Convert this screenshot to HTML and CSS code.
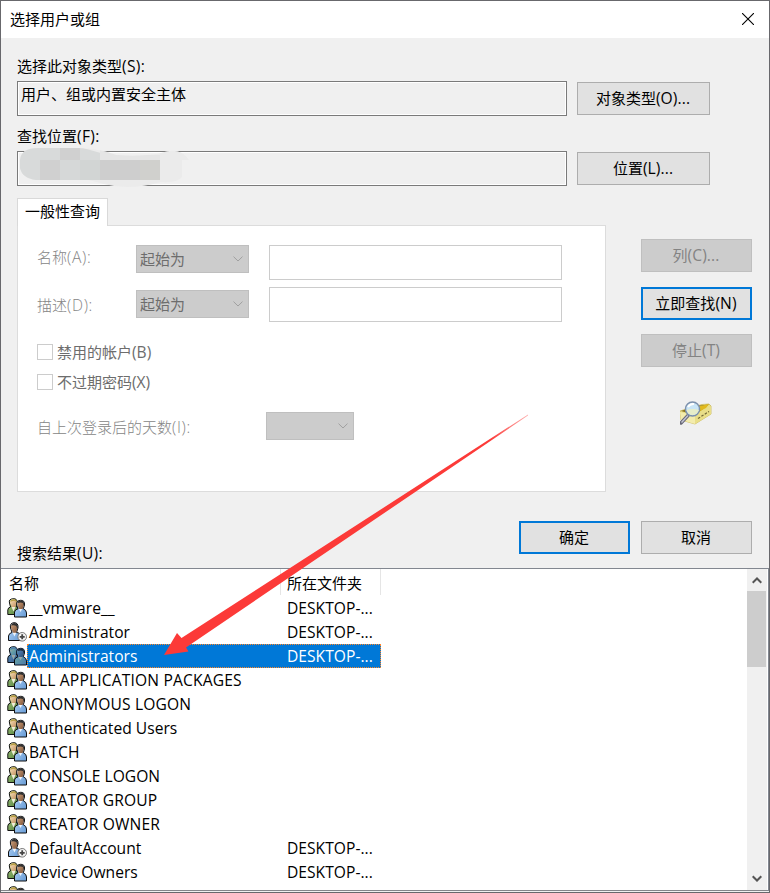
FILE: index.html
```html
<!DOCTYPE html>
<html lang="zh-CN">
<head>
<meta charset="utf-8">
<title>选择用户或组</title>
<link rel="stylesheet" href="styles.css">
</head>
<body>
<svg class="defs" width="0" height="0" aria-hidden="true">
  <defs>
    <linearGradient id="face" x1="0" y1="0" x2="1" y2="1"><stop offset="0" stop-color="#fbe5bd"/><stop offset="1" stop-color="#c08e5e"/></linearGradient>
    <linearGradient id="face2" x1="0" y1="0" x2="1" y2="1"><stop offset="0" stop-color="#d0a581"/><stop offset="1" stop-color="#805335"/></linearGradient>
    <linearGradient id="green" x1="0" y1="0" x2="1" y2="1"><stop offset="0" stop-color="#a8cc83"/><stop offset="1" stop-color="#4e7c36"/></linearGradient>
    <linearGradient id="blue" x1="0" y1="0" x2="1" y2="1"><stop offset="0" stop-color="#b9d9fa"/><stop offset="1" stop-color="#6599d4"/></linearGradient>
    <symbol id="group" viewBox="0 0 20 20">
      <path d="M.8 16.500V12Q1 9.500 3.500 9L2.500 5Q1.500 1 6 .8Q10 0 10.500 5L9.500 9L12 11V16.500Z" fill="url(#green)" stroke="#111" stroke-width="1"/>
      <path d="M3 5Q2.500 1.300 6 1.200Q9.800 1 9.800 5L8.300 9H4.800Z" fill="url(#face)"/>
      <path d="M3 4Q4 1 7 1.200Q9.500 1.500 9.800 4L7 2.700L4 3.500Z" fill="#b79d43"/>
      <path d="M4.500 9L6.500 13.500L8.500 9Z" fill="#f1edda"/>
      <path d="M7.500 19V14Q8 11.500 11 10.800L9.700 7Q9 2.500 13.500 2.300Q18 2 17.500 7L16.300 10.800Q19.500 12 19.500 15V19Z" fill="url(#blue)" stroke="#111" stroke-width="1"/>
      <path d="M10.300 7Q10 3 13.500 2.800Q17 2.600 17 7L15.500 11H12Z" fill="url(#face2)"/>
      <path d="M10.300 5Q11 2.600 13.500 2.600Q18 2.500 17 8.500L16 5Q14 3.800 10.300 5Z" fill="#303030"/>
      <path d="M11.800 11L13.500 14L15.200 11Z" fill="#edf4fc"/>
    </symbol>
    <symbol id="user" viewBox="0 0 20 20">
      <path d="M1.500 18.500V14Q2 11 5 10.500L3.500 6Q2.500 1 7 .7Q11.500 .5 11 6L9.500 10.500Q14 11 14 14V18.500Z" fill="url(#blue)" stroke="#111" stroke-width="1"/>
      <path d="M4 6Q3.500 1.500 7 1.200Q10.500 1 10.500 6L9 11H6Z" fill="url(#face2)"/>
      <path d="M4 3.600Q5 1 7 1Q12 .7 10.500 7.500L9.300 4Q7 2.600 4 3.600Z" fill="#303030"/>
      <path d="M5.500 10.800L7.500 14.500L9.300 10.800Z" fill="#edf4fc"/>
      <circle cx="15.200" cy="14.800" r="4.300" fill="#f4f4f4" stroke="#777"/>
      <path d="M15.200 12.300V17.300M12.700 14.800H17.700" stroke="#444" stroke-width="1.800"/>
    </symbol>
    <symbol id="chev" viewBox="0 0 10 6"><path d="M.5 .6L5 5L9.500 .6" fill="none" stroke="currentColor"/></symbol>
  </defs>
</svg>
<div class="dialog">
  <header class="titlebar"><span>选择用户或组</span>
    <svg class="close" width="12" height="12" viewBox="0 0 12 12"><path d="M0 0L12 12M12 0L0 12" stroke="#000" stroke-width="1.100"/></svg>
  </header>
  <main class="content">
    <div class="label">选择此对象类型<span class="key">(S):</span></div>
    <div class="line"><div class="readonly">用户、组或内置安全主体</div><div class="btn wide">对象类型<span class="key">(O)...</span></div></div>
    <div class="label">查找位置<span class="key">(F):</span></div>
    <div class="line"><div class="readonly"></div><div class="btn wide">位置<span class="key">(L)...</span></div>
      <svg class="smudge" width="172" height="42" viewBox="0 0 172 42">
        <defs><clipPath id="blot"><path d="M2 12Q3 0 20 0H60Q84 1 98 7Q124 9 143 5Q162-2 171 12H164V29Q160 35 143 34Q112 43 86 36L70 32H18Q4 30 2 20Z"/></clipPath></defs>
        <g clip-path="url(#blot)">
          <path d="M0 0H172V42H0Z" fill="#ebebeb"/>
          <path d="M0 0H65Q82 5 98 9L110 12V32H0Z" fill="#d8dada"/>
          <path d="M42 0H62V12H42ZM22 12H42V32H22Z" fill="#d0d0d0"/>
          <path d="M42 12H62V32H42Z" fill="#d6d8d8"/><path d="M62 12H82V32H62Z" fill="#d2d5d4"/>
          <path d="M82 12H142V32H82Z" fill="#cecece"/><path d="M122 12H142V32H122Z" fill="#d0d0cd"/>
          <path d="M82 0L112 7H142V12H82Z" fill="#e5e5e5"/>
        </g>
      </svg>
    </div>
    <div class="middle">
      <section class="tabs">
        <div class="tab">一般性查询</div>
        <div class="panel">
          <div class="query first"><span class="faint">名称<span class="key">(A):</span></span><div class="select">起始为<svg width="10" height="6"><use href="#chev"/></svg></div><div class="input"></div></div>
          <div class="query second"><span class="faint">描述<span class="key">(D):</span></span><div class="select">起始为<svg width="10" height="6"><use href="#chev"/></svg></div><div class="input"></div></div>
          <div class="check"><i></i><span>禁用的帐户<span class="key">(B)</span></span></div>
          <div class="check"><i></i><span>不过期密码<span class="key">(X)</span></span></div>
          <div class="days"><span class="faint">自上次登录后的天数<span class="key">(I):</span></span><div class="select small"><svg width="10" height="6"><use href="#chev"/></svg></div></div>
        </div>
      </section>
      <aside class="side">
        <div class="btn disabled">列<span class="key">(C)...</span></div>
        <div class="btn primary">立即查找<span class="key">(N)</span></div>
        <div class="btn disabled">停止<span class="key">(T)</span></div>
        <svg class="search" width="32" height="25" viewBox="0 0 32 25">
          <path d="M0 10L22 3.500L29 3L31 5V13L15 23L1 19Z" fill="#e9df87" stroke="#c9b85c" stroke-width=".8"/>
          <path d="M1 10L15 5L29 3.500L15 14Z" fill="#8a7420"/><path d="M16 6L29 3L26 7L18 11Z" fill="#e1b91c"/>
          <path d="M0 11L15 14.500V23L1 19Z" fill="#f3ecad"/><path d="M15 14.500L31 5V13L15 23Z" fill="#e9de88"/>
          <path d="M18 17.500L29 10.500" stroke="#706637" stroke-width="1.200" stroke-dasharray="2.500 1.500"/>
          <path d="M1 22L8 14.500" stroke="#686878" stroke-width="3.400" stroke-linecap="round"/><path d="M1.500 21.500L8 14.500" stroke="#c3c5d3" stroke-width="1.400"/>
          <circle cx="12.500" cy="8" r="7" fill="#c9e5f6" stroke="#7d91ac" stroke-width="1.500"/>
          <path d="M6.500 9Q12 7 19 9Q17 14 12.500 14Q8 14 6.500 9" fill="#e7edc9"/><path d="M8 6Q10 2.500 14 3" fill="none" stroke="#fff" stroke-width="2"/>
        </svg>
      </aside>
    </div>
    <div class="footer"><div class="label results">搜索结果<span class="key">(U):</span></div><div class="btn primary">确定</div><div class="btn">取消</div></div>
  </main>
  <section class="list">
    <div class="rows">
      <div class="head"><span>名称</span><span>所在文件夹</span></div>
      <div class="row"><svg><use href="#group"/></svg><div class="cells"><span>__vmware__</span><span>DESKTOP-...</span></div></div>
      <div class="row"><svg><use href="#user"/></svg><div class="cells"><span>Administrator</span><span>DESKTOP-...</span></div></div>
      <div class="row selected"><svg><use href="#group"/></svg><div class="cells"><span>Administrators</span><span>DESKTOP-...</span></div></div>
      <div class="row caps"><svg><use href="#group"/></svg><div class="cells"><span>ALL APPLICATION PACKAGES</span></div></div>
      <div class="row caps"><svg><use href="#group"/></svg><div class="cells"><span>ANONYMOUS LOGON</span></div></div>
      <div class="row"><svg><use href="#group"/></svg><div class="cells"><span>Authenticated Users</span></div></div>
      <div class="row caps"><svg><use href="#group"/></svg><div class="cells"><span>BATCH</span></div></div>
      <div class="row"><svg><use href="#group"/></svg><div class="cells"><span>CONSOLE LOGON</span></div></div>
      <div class="row caps"><svg><use href="#group"/></svg><div class="cells"><span>CREATOR GROUP</span></div></div>
      <div class="row caps"><svg><use href="#group"/></svg><div class="cells"><span>CREATOR OWNER</span></div></div>
      <div class="row"><svg><use href="#user"/></svg><div class="cells"><span>DefaultAccount</span><span>DESKTOP-...</span></div></div>
      <div class="row"><svg><use href="#group"/></svg><div class="cells"><span>Device Owners</span><span>DESKTOP-...</span></div></div>
      <div class="row"><svg><use href="#group"/></svg></div>
    </div>
    <div class="scroll">
      <svg class="up" width="10" height="7" viewBox="0 0 10 7"><path d="M.7 5.800L5 1.500L9.300 5.800" fill="none" stroke="#555" stroke-width="2"/></svg>
      <div class="thumb"></div>
      <svg class="down" width="10" height="7" viewBox="0 0 10 7"><path d="M.7 1.200L5 5.500L9.300 1.200" fill="none" stroke="#555" stroke-width="2"/></svg>
    </div>
  </section>
  <svg class="arrow" width="770" height="893" viewBox="0 0 770 893">
    <defs><linearGradient id="fade" gradientUnits="userSpaceOnUse" x1="528" y1="415" x2="490" y2="440"><stop offset="0" stop-color="#fc3a38" stop-opacity=".4"/><stop offset="1" stop-color="#fc3a38"/></linearGradient></defs>
    <path d="M528 414.500L181.500 638L177 633L164 655L188.500 651.500L186 647.500L528 415.500Z" fill="url(#fade)"/>
  </svg>
</div>
</body>
</html>
```
FILE: styles.css
```css
* { box-sizing: border-box; }
body { margin: 0; font: 15px/20px "Open Sans", "Noto Sans CJK SC", sans-serif; color: #000; overflow: hidden; }
svg { display: block; flex: none; }
.defs { position: absolute; }
.dialog { position: relative; width: 770px; height: 893px; border: 1px solid #68686c; background: #f0f0f0; display: flex; flex-direction: column; white-space: nowrap; overflow: hidden; }
.titlebar { height: 37px; background: #fff; padding: 0 15px 2px 9px; display: flex; align-items: center; justify-content: space-between; flex: none; }
.content { height: 530px; flex: none; padding: 18px 17px 0 16px; }
.label { height: 20px; margin-bottom: 5px; }
.key { font-size: 15.6px; letter-spacing: .3px; }
.line { position: relative; display: flex; align-items: center; gap: 10px; height: 35px; margin-bottom: 10px; }
.readonly { width: 550px; height: 35px; border: 1px solid #7a7a7a; box-shadow: inset 0 0 0 1px #fff; padding: 2px 3px; }
.btn { width: 111px; height: 33px; border: 1px solid #adadad; background: #e1e1e1; display: flex; align-items: center; justify-content: center; flex: none; padding: 0 1px 2px 0; }
.btn .key { letter-spacing: .1px; }
.btn.wide { width: 133px; }
.primary { border: 2px solid #0078d7; }
.disabled { background: #ccc; border-color: #bfbfbf; color: #838383; }
.smudge { position: absolute; left: 1px; top: -3px; }
.middle { display: flex; justify-content: space-between; margin-top: 12px; height: 294px; }
.tabs { width: 589px; }
.tab { position: relative; z-index: 1; width: 91px; height: 28px; border: 1px solid #d9d9d9; border-bottom: 0; background: #fff; padding: 2px 7px; }
.panel { height: 267px; margin-top: -1px; border: 1px solid #dcdcdc; background: #fff; padding: 19px 0 0 19px; }
.query { display: flex; align-items: flex-start; }
.query > .faint { width: 99px; }
.first { height: 42px; }
.first > .faint { margin-top: 2px; }
.second { height: 55px; }
.second > .faint { margin-top: 8px; }
.second .select { margin-top: 3px; }
.faint { color: #858585; font-weight: 300; }
.faint .key { letter-spacing: .7px; }
.select { width: 113px; height: 28px; border: 1px solid #bfbfbf; background: #ccc; color: #6d6d6d; display: flex; align-items: center; justify-content: space-between; padding: 0 5px 0 3px; }
.select svg { color: #a0a0a0; }
.small { width: 88px; justify-content: flex-end; }
.input { width: 293px; height: 35px; margin-left: 20px; border: 1px solid #ccc; background: #fff; }
.check { display: flex; align-items: center; height: 20px; margin-bottom: 10px; color: #6d6d6d; gap: 4px; }
.check .key { letter-spacing: 0; }
.check i { width: 16px; height: 16px; border: 1px solid #ccc; }
.days { margin-top: 20px; display: flex; align-items: center; height: 28px; }
.days > .faint { width: 229px; padding-top: 2px; }
.side { width: 111px; padding-top: 41px; display: flex; flex-direction: column; gap: 15px; }
.side .disabled:nth-child(3) { margin-top: -1px; }
.search { margin: 19px 0 0 39px; }
.footer { display: flex; gap: 11px; margin-top: 29px; }
.results { margin: 22px auto 0 0; }
.list { height: 323px; flex: none; background: #fff; border-top: 1px solid #828790; border-right: 1px solid #828790; border-bottom: 1px solid #85858a; display: flex; justify-content: space-between; overflow: hidden; }
.rows { flex: 1; overflow: hidden; }
.head { display: flex; height: 27px; align-items: flex-start; }
.head span { width: 280px; height: 26px; padding: 4px 0 0 8px; border-right: 1px solid #e5e5e5; }
.head span + span { width: 100px; padding-left: 6px; }
.row { height: 24px; display: flex; align-items: center; padding-left: 6px; }
.row svg { width: 20px; height: 20px; }
.cells { display: flex; width: 354px; height: 24px; font-size: 15.6px; line-height: 24px; letter-spacing: .03px; }
.caps .cells { letter-spacing: .16px; }
.cells span { width: 258px; padding-left: 2px; }
.cells span + span { width: 96px; }
.selected .cells { background: #0078d7; color: #fff; outline: 1px dotted #ff8728; outline-offset: -1px; }
.selected svg { filter: sepia(1) hue-rotate(172deg) saturate(2.4) brightness(.65); }
.scroll { width: 20px; margin-right: 1px; background: #f0f0f0; display: flex; flex-direction: column; align-items: center; padding: 8px 1px 8px 0; }
.thumb { width: 19px; height: 76px; margin-top: 7px; background: #cdcdcd; align-self: flex-start; }
.down { margin-top: auto; }
.arrow { position: absolute; left: -1px; top: -1px; }
```
